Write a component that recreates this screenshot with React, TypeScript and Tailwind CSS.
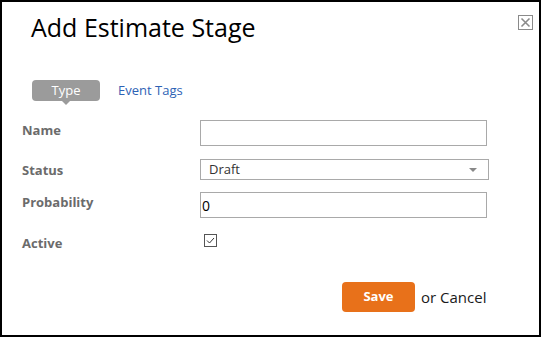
import React from 'react';

const font = { fontFamily: '"Open Sans", "Noto Sans", sans-serif' };

const FieldRow: React.FC<{ label: string; lead: string; children: React.ReactNode; className?: string }> = ({
  label,
  lead,
  children,
  className = '',
}) => (
  <div className={`flex items-start ${className}`}>
    <div className={`w-[178px] shrink-0 text-[13px] font-bold text-[#6b6b6b] ${lead}`}>{label}</div>
    {children}
  </div>
);

export default function App() {
  return (
    <div className="w-[542px] h-[339px] bg-white" style={font}>
      <div className="relative w-[541px] h-[337px] border-2 border-black bg-white flex flex-col pl-[20px]">
        {/* Close button */}
        <button className="absolute top-[13px] right-[6px] w-[15px] h-[15px] border border-[#8a8a8a] flex items-center justify-center">
          <svg width="11" height="11" viewBox="0 0 11 11">
            <path d="M1.5 1.5 L9.5 9.5 M9.5 1.5 L1.5 9.5" stroke="#8a8a8a" strokeWidth="1.6" />
          </svg>
        </button>

        {/* Title */}
        <h1 className="mt-[8px] ml-[9px] text-[25px] leading-[34px] text-black">Add Estimate Stage</h1>

        {/* Tabs */}
        <div className="mt-[36px] ml-[10px] flex items-center gap-[18px]">
          <div className="relative w-[68px] h-[21px] rounded-[4px] bg-[#9b9b9b] text-white text-[13px] flex items-center justify-center">
            Type
            <span className="absolute left-[30px] -bottom-[4px] w-0 h-0 border-l-[4px] border-r-[4px] border-t-[4px] border-l-transparent border-r-transparent border-t-[#9b9b9b]" />
          </div>
          <a className="text-[13px] text-[#2e62b5]">Event Tags</a>
        </div>

        {/* Form */}
        <div className="mt-[19px] flex flex-col">
          <FieldRow label="Name" lead="pt-[1px] leading-[18px]">
            <input className="w-[287px] h-[26px] border border-[#a9a9a9] outline-none px-[2px] text-[15px]" />
          </FieldRow>
          <FieldRow label="Status" lead="pt-[1px] leading-[20px]" className="mt-[13px]">
            <div className="w-[289px] h-[21px] border border-[#a9a9a9] flex items-center justify-between pl-[8px] pr-[11px] text-[13px] text-[#333]">
              <span>Draft</span>
              <span className="w-0 h-0 border-l-[4px] border-r-[4px] border-t-[4px] border-l-transparent border-r-transparent border-t-[#888]" />
            </div>
          </FieldRow>
          <FieldRow label="Probability" lead="pt-[1px] leading-[18px]" className="mt-[12px]">
            <input
              defaultValue="0"
              className="w-[287px] h-[26px] border border-[#a9a9a9] outline-none px-[1px] text-[14px] text-black"
            />
          </FieldRow>
          <FieldRow label="Active" lead="pt-[2px] leading-[14px]" className="mt-[16px]">
            <div className="ml-[4px] w-[13px] h-[13px] border border-[#555] flex items-center justify-center">
              <svg width="9" height="9" viewBox="0 0 9 9">
                <path d="M1 4.5 L3.5 7 L8 2" fill="none" stroke="#333" strokeWidth="1" />
              </svg>
            </div>
          </FieldRow>
        </div>

        {/* Footer */}
        <div className="mt-[32px] ml-[320px] flex items-center">
          <button className="w-[73px] h-[30px] rounded-[4px] bg-[#e8711a] text-white text-[13px] font-bold">Save</button>
          <span className="ml-[6px] text-[15px] text-[#1a1a1a]">or Cancel</span>
        </div>
      </div>
    </div>
  );
}
